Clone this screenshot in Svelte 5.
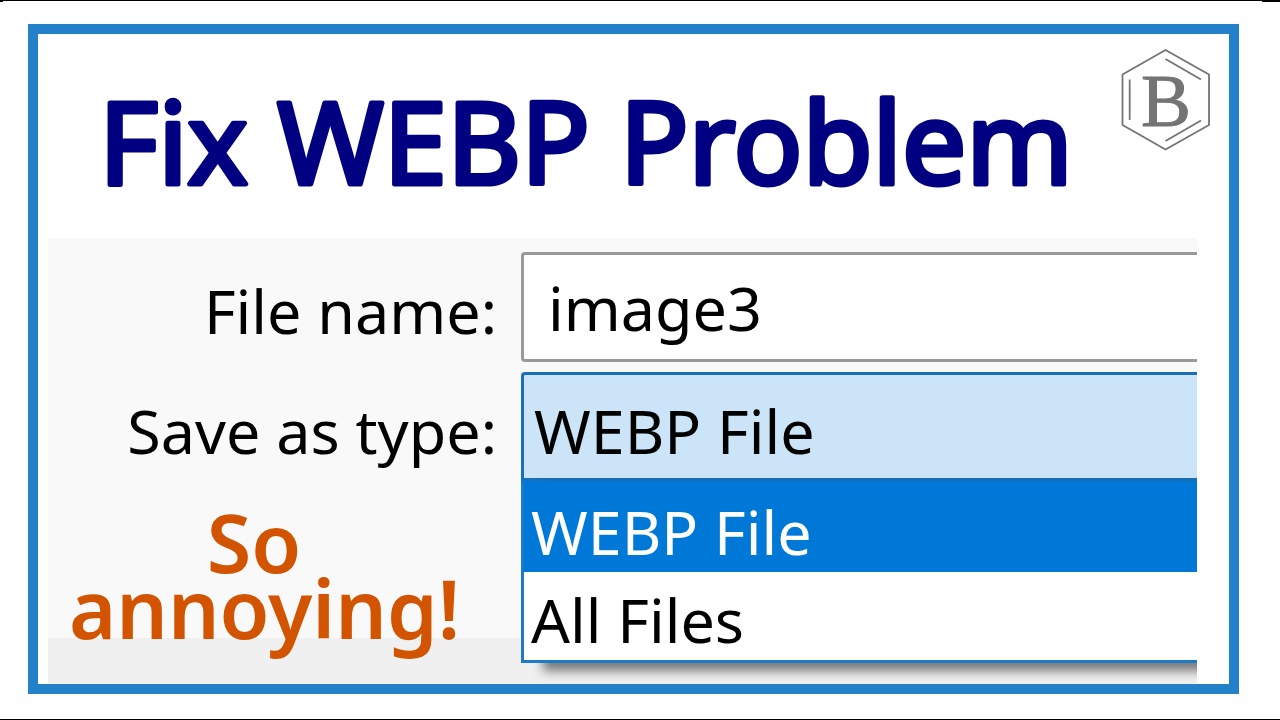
<script lang="ts">
  const types = ['WEBP File', 'All Files']

  let fileName = $state('image3')
  let fileType = $state('WEBP File')
</script>

<main class="page">
  <section class="frame">
    <header class="header">
      <h1 class="title">
        <svg viewBox="0 0 970 156">
          <text x="0" y="120">Fix WEBP Problem</text>
        </svg>
      </h1>
      <svg class="logo" viewBox="0 0 90 104" role="img" aria-label="B">
        <g fill="none" stroke="#747474" stroke-width="1.8">
          <path d="M44.5 2 L88 26.5 V77 L44.5 101.5 L1.5 77 V26.5 Z" />
          <path d="M44.5 11 L80 31.5 M8.7 31.5 V72 M44.5 93 L80 72.5" />
        </g>
        <text x="45" y="78" text-anchor="middle">B</text>
      </svg>
    </header>

    <form class="dialog">
      <label for="file-name">File name:</label>
      <input id="file-name" type="text" bind:value={fileName} />

      <label for="file-type">Save as type:</label>
      <select id="file-type" bind:value={fileType}>
        {#each types as type}
          <option value={type}>{type}</option>
        {/each}
      </select>

      <p class="remark">So&nbsp;<br />annoying!</p>
      <ul class="options" role="listbox" aria-label="Save as type">
        {#each types as type}
          <li role="option" aria-selected={type === fileType} class:selected={type === fileType}>
            {type}
          </li>
        {/each}
      </ul>
    </form>
  </section>
</main>

<style>
  .page {
    box-sizing: border-box;
    min-height: 100vh;
    padding: 23px 41px 25px 28px;
    border-top: 1px solid #000;
    border-bottom: 1px solid #000;
    background:
      linear-gradient(#000, #000) right top / 18px 1px no-repeat,
      linear-gradient(#000, #000) left top / 3px 1px no-repeat,
      #fefefe;
    font-family: 'Noto Sans', sans-serif;
  }

  .frame {
    border: 10px solid #2281c8;
    background: #fff;
  }

  .header {
    display: flex;
    justify-content: space-between;
    align-items: flex-start;
    height: 204px;
    padding: 0 18px 0 61px;
    box-sizing: border-box;
  }

  .title {
    margin: 30px 0 0;
    font-size: 114px;
    font-weight: 400;
  }

  .title svg {
    display: block;
    width: 970px;
    height: 156px;
    overflow: visible;
    fill: #000080;
    stroke: #000080;
    stroke-width: 5px;
    stroke-linejoin: round;
  }

  .logo {
    flex: none;
    width: 90px;
    height: 104px;
    margin-top: 14px;
  }

  .logo text {
    font-family: 'Liberation Serif', serif;
    font-size: 75px;
    fill: #747474;
    stroke: #747474;
    stroke-width: 1px;
  }

  .dialog {
    display: grid;
    grid-template-columns: 473px 1fr;
    grid-template-rows: 110px 109px 1fr;
    row-gap: 10px;
    height: 446px;
    margin: 0 32px 0 10px;
    padding-top: 14px;
    box-sizing: border-box;
    overflow: hidden;
    background: linear-gradient(#f9f9f9 400px, #f0f0f0 400px);
    font-size: 61px;
    color: #000;
  }

  label {
    padding-right: 24px;
    text-align: right;
    line-height: 118px;
  }

  input,
  select {
    appearance: none;
    width: 100%;
    height: 100%;
    margin: 0;
    box-sizing: border-box;
    border: 3px solid #999;
    border-right: 0;
    border-radius: 4px 0 0 4px;
    outline: 0;
    background: #fff;
    font: inherit;
    color: inherit;
  }

  input {
    padding: 0 0 0 24px;
  }

  select {
    padding: 8px 0 0 10px;
    border-color: #1a6fb8;
    border-bottom-left-radius: 0;
    background: #cce4f7;
  }

  .remark {
    margin: 18px 0 0;
    padding-right: 40px;
    text-align: center;
    font-size: 81px;
    font-weight: 600;
    line-height: 66px;
    color: #d35400;
  }

  .options {
    align-self: start;
    margin: -10px 0 0;
    padding: 0;
    border: 3px solid #1c7ac8;
    border-top-color: #0078d7;
    border-right: 0;
    list-style: none;
    background: #fff;
    box-shadow: 22px 8px 10px rgba(0, 0, 0, 0.5);
  }

  li {
    height: 88px;
    padding-left: 7px;
    line-height: 96px;
  }

  li.selected {
    background: #0078d7;
    color: #fff;
  }
</style>
